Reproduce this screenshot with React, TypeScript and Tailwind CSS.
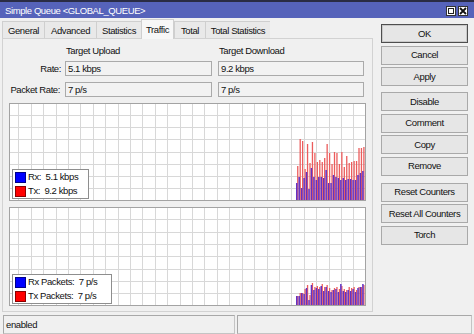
import React from "react";

const g1Red = [34, 61, 59, 31, 56, 37, 58, 47, 38, 40, 38, 42, 56, 47, 36, 48, 47, 36, 48, 33, 44, 37, 38, 39, 39, 52, 52, 53];
const g1Pur = [17, 23, 12, 22, 28, 11, 32, 23, 20, 23, 23, 22, 30, 17, 17, 25, 23, 22, 20, 22, 20, 21, 21, 20, 20, 25, 27, 29];
const g2Red = [9, 12, 12, 16, 20, 10, 22, 18, 19, 18, 21, 18, 20, 17, 15, 17, 18, 16, 19, 16, 15, 18, 17, 18, 15, 18, 18, 20];
const g2Pur = [9, 9, 12, 11, 17, 5, 20, 15, 17, 16, 19, 14, 18, 14, 13, 15, 16, 13, 21, 14, 13, 15, 14, 16, 13, 17, 18, 21];

function Graph({
  h,
  hOffset,
  hStep,
  red,
  pur,
  legend,
  legendPad,
}: {
  h: number;
  hOffset: number;
  hStep: number;
  red: number[];
  pur: number[];
  legend: [string, string];
  legendPad: number;
}) {
  const w = 355;
  const inner = h - 2;
  const vx: number[] = [];
  for (let k = 0; 8.3 + k * 12.41 < w; k++) vx.push(Math.round(8.3 + k * 12.41) + 0.5);
  const hy: number[] = [];
  for (let k = 0; hOffset + k * hStep < inner; k++) hy.push(Math.round(hOffset + k * hStep) + 0.5);
  return (
    <div className="relative ml-[6px] w-[357px] border border-[#a3a3a3] bg-white" style={{ height: h }}>
      <svg width={w} height={inner} className="block">
        {vx.map((x) => (
          <line key={"v" + x} x1={x} y1={0} x2={x} y2={inner} stroke="#d8d8d8" strokeWidth={1} />
        ))}
        {hy.map((y) => (
          <line key={"h" + y} x1={0} y1={y} x2={w} y2={y} stroke="#d8d8d8" strokeWidth={1} />
        ))}
        {red.map((r, i) => {
          const x0 = 286 + i * 2.45;
          return (
            <g key={i}>
              <rect x={x0 + 1.1} y={inner - r} width={1.3} height={r} fill="#ec5c5c" />
              <rect x={x0} y={inner - pur[i]} width={1.5} height={pur[i]} fill="#6232c4" />
            </g>
          );
        })}
      </svg>
      <div
        className="absolute left-[2px] bottom-[1px] border border-[#8e8e8e] bg-white pl-[2px] py-[1px] flex flex-col gap-[2px]"
        style={{ paddingRight: legendPad }}
      >
        <div className="flex items-center gap-[2px] h-[12px]">
          <div className="w-[11px] h-[11px] bg-[#0000ff] border border-[#00008a]" />
          <span className="whitespace-pre">{legend[0]}</span>
        </div>
        <div className="flex items-center gap-[2px] h-[12px]">
          <div className="w-[11px] h-[11px] bg-[#ff0000] border border-[#8a0000]" />
          <span className="whitespace-pre">{legend[1]}</span>
        </div>
      </div>
    </div>
  );
}

function Btn({ label, primary }: { label: string; primary?: boolean }) {
  return (
    <div
      className={
        primary
          ? "h-[19px] flex items-center justify-center border border-[#4e4e4e] shadow-[inset_0_0_0_1px_#c9c9c9] bg-[#e6e6e6]"
          : "h-[19px] flex items-center justify-center border border-[#a9a9a9] bg-[#e6e6e6]"
      }
    >
      {label}
    </div>
  );
}

const tabs = [
  { label: "General", w: 42 },
  { label: "Advanced", w: 52 },
  { label: "Statistics", w: 45 },
  { label: "Traffic", w: 33, sel: true },
  { label: "Total", w: 31 },
  { label: "Total Statistics", w: 65 },
];

export default function App() {
  return (
    <div className="w-[474px] h-[334px] bg-[#f0f0f0] flex flex-col overflow-hidden font-['Liberation_Sans',Arial,sans-serif] text-[9.5px] tracking-[-0.4px] leading-none text-[#111]">
      {/* Title bar */}
      <div className="h-[18px] shrink-0 border-t-2 border-[#2a2c44] bg-[#5663ba] flex items-center justify-between pl-[5px] pr-[6px]">
        <span className="text-white pt-[1px]">Simple Queue &lt;GLOBAL_QUEUE&gt;</span>
        <div className="flex items-center gap-[2px] pt-[1px]">
          <div className="w-[10px] h-[10px] bg-white border border-[#333] flex items-center justify-center">
            <div className="w-[6px] h-[6px] border border-[#222]" />
          </div>
          <div className="w-[10px] h-[10px] bg-white border border-[#333] flex items-center justify-center">
            <svg width="8" height="8" viewBox="0 0 8 8">
              <path d="M1 1 L7 7 M7 1 L1 7" stroke="#111" strokeWidth="1.8" />
            </svg>
          </div>
        </div>
      </div>

      {/* Body */}
      <div className="h-[297px] shrink-0 flex">
        <div className="w-[373px] pl-[2px] flex flex-col">
          <div className="h-[20px] flex items-end">
            {tabs.map((t) =>
              t.sel ? (
                <div
                  key={t.label}
                  className="relative z-10 -mb-px h-[20px] flex items-center justify-center border border-b-0 border-[#cfcfcf] bg-[#f7f7f7]"
                  style={{ width: t.w }}
                >
                  {t.label}
                </div>
              ) : (
                <div
                  key={t.label}
                  className="h-[17px] flex items-center justify-center pt-[2px] border border-b-0 border-r-0 border-[#cfcfcf] bg-[#e9e9e9]"
                  style={{ width: t.w }}
                >
                  {t.label}
                </div>
              )
            )}
          </div>
          <div className="w-[371px] h-[274px] border border-[#d2d2d2] bg-[#f0f0f0] pt-[5px] flex flex-col">
            <div className="h-[14px] flex items-center">
              <div className="w-[59px]" />
              <div className="ml-[3px] w-[147px] pl-[1px]">Target Upload</div>
              <div className="ml-[6px] w-[146px] pl-[1px]">Target Download</div>
            </div>
            <div className="mt-[3px] h-[15px] flex">
              <div className="w-[59px] flex items-center justify-end pr-[1px]">Rate:</div>
              <div className="ml-[3px] w-[147px] border border-[#aaaaaa] bg-[#f2f2f2] flex items-center pl-[2px]">5.1 kbps</div>
              <div className="ml-[6px] w-[146px] border border-[#aaaaaa] bg-[#f2f2f2] flex items-center pl-[2px]">9.2 kbps</div>
            </div>
            <div className="mt-[6px] h-[15px] flex">
              <div className="w-[59px] flex items-center justify-end pr-[2px]">Packet Rate:</div>
              <div className="ml-[3px] w-[147px] border border-[#aaaaaa] bg-[#f2f2f2] flex items-center pl-[2px]">7 p/s</div>
              <div className="ml-[6px] w-[146px] border border-[#aaaaaa] bg-[#f2f2f2] flex items-center pl-[2px]">7 p/s</div>
            </div>
            <div className="mt-[6px]">
              <Graph h={98} hOffset={11} hStep={12.2} red={g1Red} pur={g1Pur} legend={["Rx:  5.1 kbps", "Tx:  9.2 kbps"]} legendPad={10} />
            </div>
            <div className="mt-[6px]">
              <Graph h={99} hOffset={11.3} hStep={12.3} red={g2Red} pur={g2Pur} legend={["Rx Packets:  7 p/s", "Tx Packets:  7 p/s"]} legendPad={14} />
            </div>
          </div>
        </div>

        <div className="ml-[8px] w-[87px] pt-[6px] flex flex-col">
          <div className="flex flex-col gap-[2.5px]">
            <Btn label="OK" primary />
            <Btn label="Cancel" />
            <Btn label="Apply" />
          </div>
          <div className="mt-[6px] flex flex-col gap-[2.5px]">
            <Btn label="Disable" />
            <Btn label="Comment" />
            <Btn label="Copy" />
            <Btn label="Remove" />
          </div>
          <div className="mt-[7px] flex flex-col gap-[2.5px]">
            <Btn label="Reset Counters" />
            <Btn label="Reset All Counters" />
            <Btn label="Torch" />
          </div>
        </div>
      </div>

      {/* Status bar */}
      <div className="h-[19px] shrink-0 flex pl-[3px] pr-[2px] gap-[2px]">
        <div className="w-[232px] h-[19px] border border-[#c4c4c4] border-t-[#a8a8a8] border-l-[#a8a8a8] flex items-center pl-[2px]">enabled</div>
        <div className="flex-1 h-[19px] border border-[#c4c4c4] border-t-[#a8a8a8] border-l-[#a8a8a8]" />
      </div>
    </div>
  );
}
